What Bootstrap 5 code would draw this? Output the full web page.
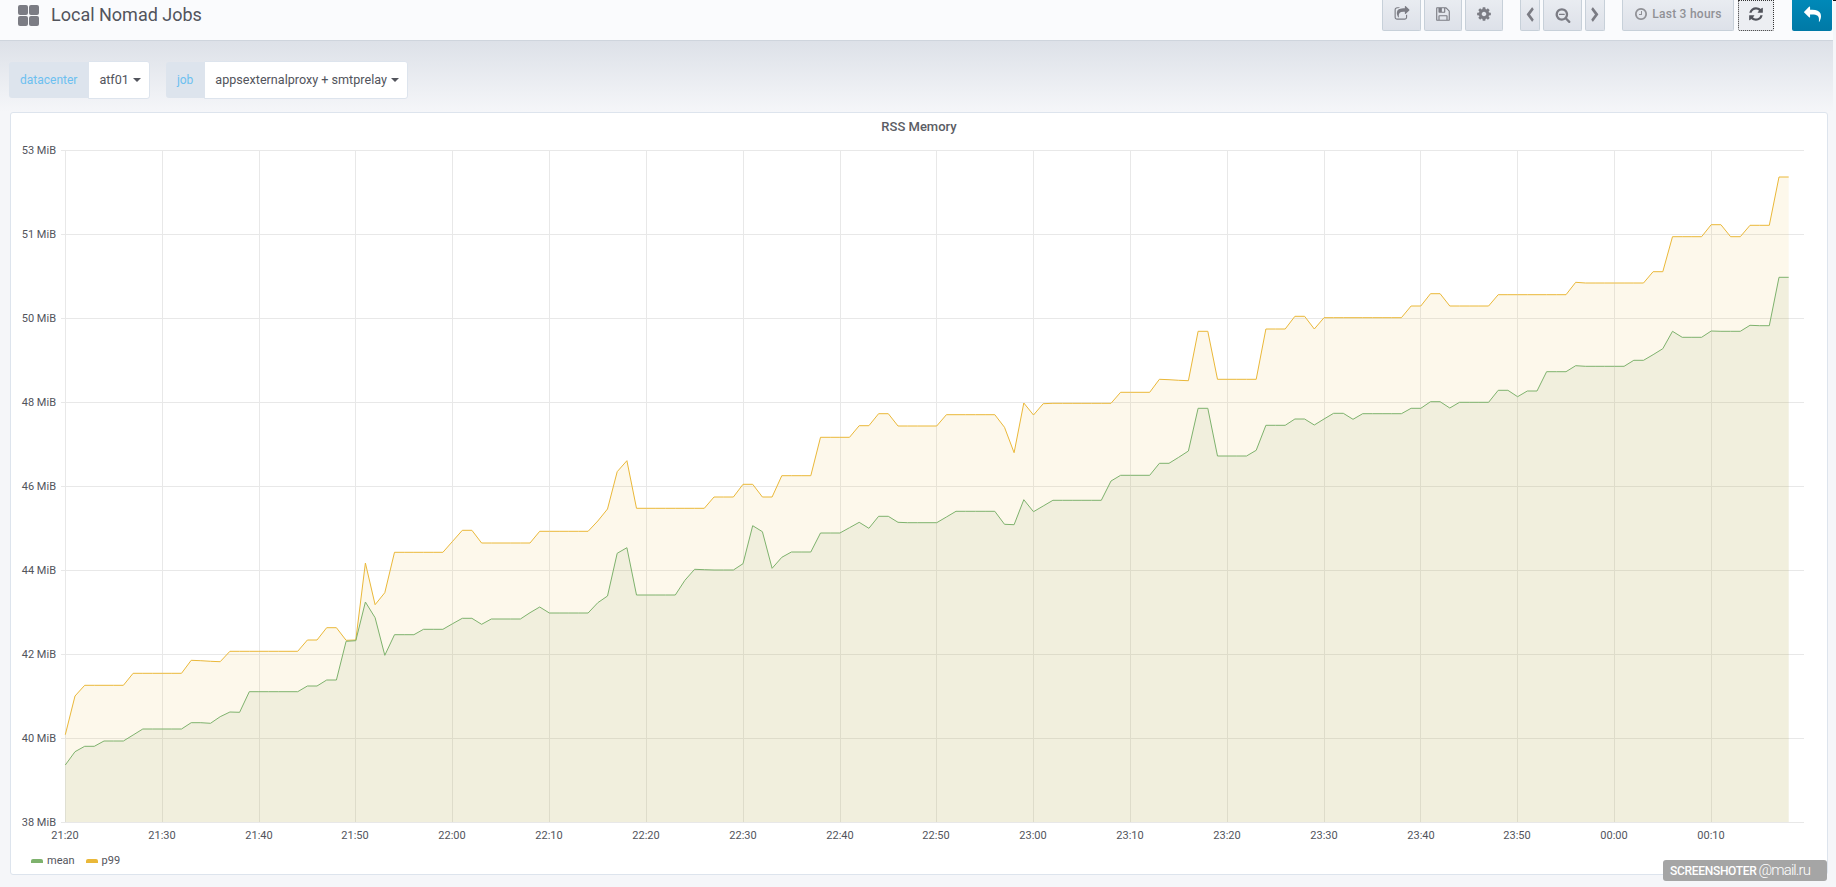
<!DOCTYPE html>
<html lang="en">
<head>
<meta charset="utf-8">
<title>Local Nomad Jobs</title>
<link rel="stylesheet" href="https://cdn.jsdelivr.net/npm/bootstrap@5.3.0/dist/css/bootstrap.min.css">
<style>
html,body{height:887px;overflow:hidden}
body{font-family:Roboto,"Liberation Sans",sans-serif;font-size:13px;color:#52545c;background:#f5f6f9;position:relative}
.dash-bar{width:1833px;height:41px;background:#fafbfd;border-bottom:1px solid #cfd5dd;padding-right:1px}
.dash-grid{display:grid;grid-template-columns:10px 10px;gap:1px;margin-left:18px;margin-top:5px;align-self:flex-start}
.dash-grid i{display:block;width:10px;height:10px;border-radius:2px;background:#7b7c84}
.dash-title{font-size:18px;line-height:21px;color:#52545c;margin:4px 0 0 12px;align-self:flex-start}
.tool{height:31px;border-radius:0 0 2px 2px;border:1px solid #c7d0d9;border-top:0;background:linear-gradient(#e9ecf1,#dde1e9);display:flex;align-items:center;justify-content:center;padding:0 0 3px;flex:none;color:#7b7c84}
.tool svg{fill:currentColor;display:block}
.w39{width:39px}.w38{width:38px}.w20{width:20px;padding:0}
.pad-z{padding-bottom:1px}
.tool-time{width:112px;font-size:12px;font-weight:500;color:#909196;gap:4px;letter-spacing:.25px}
.tool-refresh{width:36px;background:#eceef2;border:1px dotted #333;color:#52545c}
.tool-back{width:40px;border:0;background:linear-gradient(#0089b8,#0079a6);color:#fff}
.g3{gap:3px}
.m17{margin-left:17px}
.m4{margin-left:4px}
.m18{margin-left:18px}
.edge-speck{position:absolute;left:1833px;top:0;width:3px;height:1px;background:#111}
.sub-bg{width:1833px;height:71px;background:linear-gradient(#dde1e8,#f5f6f9);padding:21px 0 0 9px}
.var-label{height:36px;background:#dde4ed;color:#6cc0f0;font-size:12px;border-radius:3px 0 0 3px;padding:0 11px;display:flex;align-items:center}
.var-val{height:38px;margin-top:-1px;background:#fff;border:1px solid #dde4ed;border-radius:0 3px 3px 0;color:#52545c;font-size:12.6px;padding:0 8px 0 10px;display:flex;align-items:center;gap:4px}
.var-caret{width:0;height:0;border-left:4px solid transparent;border-right:4px solid transparent;border-top:4px solid #52545c}
.var-wrap+.var-wrap{margin-left:16px}
.chart-panel{margin:0 8px 0 10px;height:763px;background:#fff;border:1px solid #dde4ed;border-radius:3px;width:1818px}
.chart-title{height:28px;line-height:27px;text-align:center;font-weight:500;font-size:13px;color:#5a5c64}
.chart-svg{display:block;width:1816px;height:701px}
.chart-svg text{font-family:Roboto,"Liberation Sans",sans-serif;font-size:11px;fill:#52545c}
.legend-row{padding:12px 0 0 20px;font-size:11px;line-height:13px;gap:4px}
.legend-row span{margin-right:7px}
.swatch{display:block;width:12px;height:4px;border-radius:2px 2px 0 0}
.mark-wm{position:absolute;left:1663px;top:860px;width:164px;height:21px;background:#a5a5a5;border-radius:3px;color:#fff;padding-left:7px;display:flex;align-items:baseline;white-space:nowrap;font-weight:300;font-size:15px;letter-spacing:-.9px;line-height:20px}
.mark-wm b{font-weight:500;font-size:12px;letter-spacing:-.3px;margin-right:2px}
</style>
</head>
<body>
<header class="dash-bar d-flex">
  <div class="dash-grid"><i></i><i></i><i></i><i></i></div>
  <div class="dash-title">Local Nomad Jobs</div>
  <div class="ms-auto d-flex">
    <div class="d-flex g3">
      <button class="tool w39" type="button" aria-label="Share"><svg width="16" height="16" viewBox="0 0 1792 1792"><path d="M1472 989v259q0 119-84.500 203.500t-203.500 84.500h-832q-119 0-203.500-84.500t-84.500-203.500v-832q0-119 84.500-203.500t203.500-84.500h255q13 0 22.500 9.500t9.500 22.500q0 27-26 32-77 26-133 60-10 4-16 4h-112q-66 0-113 47t-47 113v832q0 66 47 113t113 47h832q66 0 113-47t47-113v-214q0-19 18-29 28-13 54-37 16-16 35-8 21 9 21 29zm237-496l-384 384q-18 19-45 19-12 0-25-5-39-17-39-59v-192h-160q-323 0-438 131-119 137-74 473 3 23-20 34-8 2-12 2-16 0-26-13-10-14-21-31t-39.500-68.500-49.500-99.500-38.500-114-17.500-122q0-49 3.500-91t14-90 28-88 47-81.500 68.500-74 94.500-61.500 124.500-48.500 159.500-30.500 196.500-11h160v-192q0-42 39-59 13-5 25-5 26 0 45 19l384 384q19 19 19 45t-19 45z"/></svg></button>
      <button class="tool w38" type="button" aria-label="Save"><svg width="16" height="16" viewBox="0 0 1792 1792"><path d="M512 1536h768v-384h-768v384zm896 0h128v-896q0-14-10-38.500t-20-34.500l-281-281q-10-10-34-20t-39-10v416q0 40-28 68t-68 28h-576q-40 0-68-28t-28-68v-416h-128v1280h128v-416q0-40 28-68t68-28h832q40 0 68 28t28 68v416zm-384-928v-320q0-13-9.500-22.500t-22.500-9.500h-192q-13 0-22.500 9.500t-9.500 22.500v320q0 13 9.500 22.500t22.500 9.500h192q13 0 22.500-9.500t9.500-22.500zm640 32v928q0 40-28 68t-68 28h-1344q-40 0-68-28t-28-68v-1344q0-40 28-68t68-28h928q40 0 88 20t76 48l280 280q28 28 48 76t20 88z"/></svg></button>
      <button class="tool w38" type="button" aria-label="Settings"><svg width="16" height="16" viewBox="0 0 1792 1792"><path d="M1152 896q0-106-75-181t-181-75-181 75-75 181 75 181 181 75 181-75 75-181zm512-109v222q0 12-8 23t-20 13l-185 28q-19 54-39 91 35 50 107 138 10 12 10 25t-9 23q-27 37-99 108t-94 71q-12 0-26-9l-138-108q-44 23-91 38-16 136-29 186-7 28-36 28h-222q-14 0-24.500-8.500t-11.500-21.500l-28-184q-49-16-90-37l-141 107q-10 9-25 9-14 0-25-11-126-114-165-168-7-10-7-23 0-12 8-23 15-21 51-66.500t54-70.500q-27-50-41-99l-183-27q-13-2-21-12.500t-8-23.500v-222q0-12 8-23t19-13l186-28q14-46 39-92-40-57-107-138-10-12-10-24 0-10 9-23 26-36 98.500-107.500t94.500-71.500q13 0 26 10l138 107q44-23 91-38 16-136 29-186 7-28 36-28h222q14 0 24.500 8.500t11.500 21.500l28 184q49 16 90 37l142-107q9-9 24-9 13 0 25 10 129 119 165 170 7 8 7 22 0 12-8 23-15 21-51 66.500t-54 70.500q26 50 41 98l183 28q13 2 21 12.500t8 23.500z"/></svg></button>
    </div>
    <div class="d-flex g3 m17">
      <button class="tool w20" type="button" aria-label="Back"><svg width="12" height="16" viewBox="0 0 1792 1792" preserveAspectRatio="none"><path d="M1427 301l-531 531 531 531q19 19 19 45t-19 45l-166 166q-19 19-45 19t-45-19l-742-742q-19-19-19-45t19-45l742-742q19-19 45-19t45 19l166 166q19 19 19 45t-19 45z"/></svg></button>
      <button class="tool w39 pad-z" type="button" aria-label="Zoom out"><svg width="16" height="16" viewBox="0 0 1792 1792"><path d="M1088 800v64q0 13-9.500 22.500t-22.500 9.500h-576q-13 0-22.500-9.500t-9.500-22.500v-64q0-13 9.500-22.500t22.500-9.500h576q13 0 22.500 9.500t9.500 22.500zm128 32q0-185-131.500-316.500t-316.500-131.500-316.500 131.500-131.500 316.500 131.500 316.500 316.500 131.500 316.500-131.500 131.500-316.500zm512 832q0 53-37.500 90.500t-90.500 37.500q-54 0-90-38l-343-342q-179 124-399 124-143 0-273.500-55.500t-225-150-150-225-55.500-273.500 55.500-273.500 150-225 225-150 273.500-55.500 273.500 55.500 225 150 150 225 55.500 273.500q0 220-124 399l343 343q37 37 37 90z"/></svg></button>
      <button class="tool w20" type="button" aria-label="Forward"><svg width="12" height="16" viewBox="0 0 1792 1792" preserveAspectRatio="none"><path d="M1363 877l-742 742q-19 19-45 19t-45-19l-166-166q-19-19-19-45t19-45l531-531-531-531q-19-19-19-45t19-45l166-166q19-19 45-19t45 19l742 742q19 19 19 45t-19 45z"/></svg></button>
    </div>
    <button class="tool tool-time m17" type="button"><svg width="14" height="14" viewBox="0 0 1792 1792"><path d="M1024 544v448q0 14-9 23t-23 9h-320q-14 0-23-9t-9-23v-64q0-14 9-23t23-9h224v-352q0-14 9-23t23-9h64q14 0 23 9t9 23zm416 352q0-148-73-273t-198-198-273-73-273 73-198 198-73 273 73 273 198 198 273 73 273-73 198-198 73-273zm224 0q0 209-103 385.500t-279.500 279.500-385.500 103-385.500-103-279.500-279.500-103-385.500 103-385.500 279.500-279.500 385.500-103 385.500 103 279.500 279.500 103 385.500z"/></svg>Last 3 hours</button>
    <button class="tool tool-refresh m4" type="button" aria-label="Refresh"><svg width="16" height="16" viewBox="0 0 1792 1792"><path d="M1639 1056q0 5-1 7-64 268-268 434.500t-478 166.500q-146 0-282.500-55t-243.500-157l-129 129q-19 19-45 19t-45-19-19-45v-448q0-26 19-45t45-19h448q26 0 45 19t19 45-19 45l-137 137q71 66 161 102t187 36q134 0 250-65t186-179q11-17 53-117 8-23 30-23h192q13 0 22.500 9.500t9.500 22.500zm25-800v448q0 26-19 45t-45 19h-448q-26 0-45-19t-19-45 19-45l138-138q-148-137-349-137-134 0-250 65t-186 179q-11 17-53 117-8 23-30 23h-199q-13 0-22.500-9.500t-9.500-22.500v-7q65-268 270-434.500t480-166.500q146 0 284 55.500t245 156.500l130-129q19-19 45-19t45 19 19 45z"/></svg></button>
    <button class="tool tool-back m18" type="button" aria-label="Return"><svg width="17" height="17" viewBox="0 0 1792 1792"><path d="M1792 1120q0 166-127 451-3 7-10.500 24t-13.500 30-13 22q-12 17-28 17-15 0-23.500-10t-8.500-25q0-9 2.500-26.500t2.500-23.500q5-68 5-123 0-101-17.500-181t-48.500-138.500-80-101-105.500-69.500-133-42.500-154-21.500-175.500-6h-224v256q0 26-19 45t-45 19-45-19l-512-512q-19-19-19-45t19-45l512-512q19-19 45-19t45 19 19 45v256h224q713 0 875 403 53 134 53 333z"/></svg></button>
  </div>
</header>
<i class="edge-speck"></i>
<section class="sub-bg d-flex align-items-start">
  <div class="var-wrap d-flex"><div class="var-label">datacenter</div><div class="var-val">atf01<span class="var-caret"></span></div></div>
  <div class="var-wrap d-flex"><div class="var-label">job</div><div class="var-val">appsexternalproxy + smtprelay<span class="var-caret"></span></div></div>
</section>
<main class="chart-panel">
  <div class="chart-title">RSS Memory</div>
  <svg class="chart-svg" viewBox="11 141 1816 701" xmlns="http://www.w3.org/2000/svg">
    <g id="grid" stroke="#e8e8e8" stroke-width="1" shape-rendering="crispEdges"></g>
    <path id="a99" fill="rgba(234,184,57,.1)"/>
    <path id="amean" fill="rgba(134,170,100,.1)"/>
    <path id="l99" fill="none" stroke="#eab839" stroke-width="1"/>
    <path id="lmean" fill="none" stroke="#7eb26d" stroke-width="1"/>
    <g text-anchor="end">
      <text x="56" y="154">53 MiB</text><text x="56" y="238">51 MiB</text><text x="56" y="322">50 MiB</text><text x="56" y="406">48 MiB</text><text x="56" y="490">46 MiB</text><text x="56" y="574">44 MiB</text><text x="56" y="658">42 MiB</text><text x="56" y="742">40 MiB</text><text x="56" y="826">38 MiB</text>
    </g>
    <g text-anchor="middle">
      <text x="65" y="839">21:20</text><text x="162" y="839">21:30</text><text x="259" y="839">21:40</text><text x="355" y="839">21:50</text><text x="452" y="839">22:00</text><text x="549" y="839">22:10</text><text x="646" y="839">22:20</text><text x="743" y="839">22:30</text><text x="840" y="839">22:40</text><text x="936" y="839">22:50</text><text x="1033" y="839">23:00</text><text x="1130" y="839">23:10</text><text x="1227" y="839">23:20</text><text x="1324" y="839">23:30</text><text x="1421" y="839">23:40</text><text x="1517" y="839">23:50</text><text x="1614" y="839">00:00</text><text x="1711" y="839">00:10</text>
    </g>
  </svg>
  <div class="legend-row d-flex align-items-center">
    <i class="swatch" style="background:#7eb26d"></i><span>mean</span>
    <i class="swatch" style="background:#eab839"></i><span>p99</span>
  </div>
</main>
<div class="mark-wm"><b>SCREENSHOTER</b>@mail.ru</div>
<script>
var p99a=[884,768,736,736,736,736,736,700,700,700,700,700,700,661,662,664,665,634,634,634,634,634,634,634,634,600,600,563,563,601,600,369,494,458,337,337,337,337,337,337,304,271,271,309,309,309,309,309,309,274,274,274,274,274,274,243,207,95,62];
var p99b=[685,685,685,685,685,685,685,685,651,651,651,613,613,651,651,587,587,587,587,472,472,472,472,437,437,401,401,438,438,438,438,438,404,404,404,404,404,404,442,518,369,405,371,370,370,370,370,370,370,370,337,337,337,337,298,299,301,302,154,154];
var p99c=[718,718,718,718,718,567,567,567,529,529,567,533,533,533,533,533,533,533,533,533,498,498,461,461,498,498,498,498,498,464,464,464,464,464,464,464,464,427,429,429,429,429,429,429,429,395,395,290,290,290,290,254,254,290,290,256,256,256,111,111];
var ma=[975,935,919,919,903,903,903,885,867,867,867,867,867,848,848,850,830,816,817,755,755,755,755,755,755,738,738,720,720,604,602,486,533,646,584,584,584,568,568,568,551,535,535,553,537,537,537,537,518,501,519,519,519,519,519,488,468,340,323];
var mb=[945,945,945,945,945,901,868,869,870,870,870,851,737,755,865,832,816,816,816,759,759,759,743,727,745,709,709,727,728,728,728,728,711,694,694,694,694,694,733,734,659,695,678,661,661,661,661,661,661,603,586,586,586,586,550,550,532,513,385,385];
var mc=[948,948,948,948,931,856,856,856,837,837,855,837,820,820,838,821,821,821,821,821,805,805,785,785,804,787,787,787,787,751,751,770,753,753,695,695,695,677,679,679,679,679,679,661,661,644,626,574,592,592,592,573,574,574,574,556,557,557,412,412];
function series(a,b,c){return a.map(function(v){return 440+v/3}).concat(b.map(function(v){return 280+v/3}),c.map(function(v){return 140+v/3}))}
function xOf(i){return 65.3+9.682*i}
function line(ys){return ys.map(function(y,i){return (i?'L':'M')+xOf(i).toFixed(1)+' '+y.toFixed(1)}).join('')}
function area(ys){return line(ys)+'L'+xOf(ys.length-1).toFixed(1)+' 822L65.3 822Z'}
var sp=series(p99a,p99b,p99c), sm=series(ma,mb,mc);
document.getElementById('l99').setAttribute('d',line(sp));
document.getElementById('a99').setAttribute('d',area(sp));
document.getElementById('lmean').setAttribute('d',line(sm));
document.getElementById('amean').setAttribute('d',area(sm));
var g=document.getElementById('grid'),s='';
for(var k=0;k<9;k++){var y=150.5+84*k;s+='<line x1="61" x2="1804" y1="'+y+'" y2="'+y+'"/>'}
for(var k=0;k<18;k++){var x=Math.round(65+96.82*k)+.5;s+='<line x1="'+x+'" x2="'+x+'" y1="150" y2="822"/>'}
g.innerHTML=s;
</script>
<script src="https://cdn.jsdelivr.net/npm/bootstrap@5.3.0/dist/js/bootstrap.bundle.min.js"></script>
</body>
</html>
